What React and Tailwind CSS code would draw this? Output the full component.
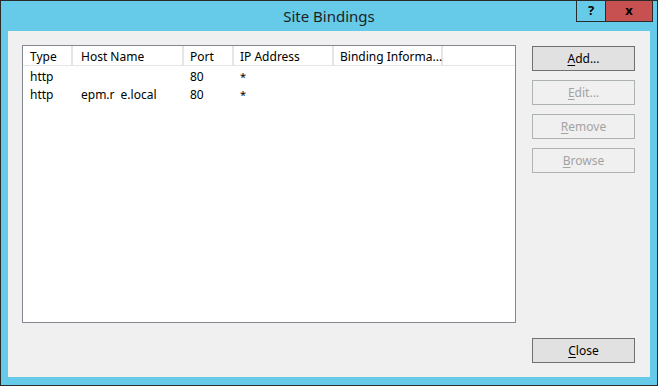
import React from 'react';

const COLUMNS = [
    { label: 'Type', width: 'w-[50px]', pad: 'pl-[7px]' },
    { label: 'Host Name', width: 'w-[111px]', pad: 'pl-[8px]' },
    { label: 'Port', width: 'w-[50px]', pad: 'pl-[6px]' },
    { label: 'IP Address', width: 'w-[100px]', pad: 'pl-[6px]' },
    { label: 'Binding Informa...', width: 'w-[109px]', pad: 'pl-[6px]' },
];

const ROWS = [
    { type: 'http', host: null, port: '80', ip: '*' },
    { type: 'http', host: 'redacted', port: '80', ip: '*' },
];

function DlgButton({ children, disabled }) {
    return (
        <button
            className={
                disabled
                    ? 'w-[103px] h-[25px] border border-[#adb2b5] bg-[#f0f0f0] text-[#a3a3a3] text-[12px] leading-none'
                    : 'w-[103px] h-[25px] border border-[#707070] bg-[#e1e1e1] text-black text-[12px] leading-none'
            }
        >
            {children}
        </button>
    );
}

export default function App() {
    return (
        <div className="w-[658px] h-[386px] bg-[#65cbe9] border border-[#2b2b2b] flex flex-col font-['Noto_Sans',sans-serif] select-none">
            {/* Title bar */}
            <div className="h-[30px] relative flex items-center justify-center">
                <span className="text-[15px] text-[#1e1e1e]">Site Bindings</span>
                <div className="absolute top-[-1px] right-[4px] flex">
                    <div className="w-[29px] h-[22px] border border-[#2b2b2b] border-r-0 flex items-center justify-center text-[13px] font-bold text-black">?</div>
                    <div className="w-[48px] h-[22px] bg-[#c75050] border border-[#2b2b2b] flex items-center justify-center text-[13px] font-bold text-black">x</div>
                </div>
            </div>

            {/* Client area */}
            <div className="flex-1 mx-[7px] mb-[8px] bg-[#f0f0f0] flex p-[14px] gap-[16px]">
                {/* Bindings list */}
                <div className="w-[494px] h-[278px] border border-[#828790] bg-white text-[12px] text-black">
                    <div className="flex h-[20px] border-b border-[#e5e5e5]">
                        {COLUMNS.map(col => (
                            <div key={col.label} className={`${col.width} ${col.pad} pt-[2px] border-r-2 border-[#e5e5e5] flex items-center whitespace-nowrap`}>
                                {col.label}
                            </div>
                        ))}
                    </div>
                    <div className="pt-[2px]">
                        {ROWS.map((row, i) => (
                            <div key={i} className="flex h-[18px] items-center whitespace-nowrap">
                                <div className="w-[50px] pl-[7px]">{row.type}</div>
                                <div className="w-[111px] pl-[8px] flex">
                                    {row.host && (
                                        <>
                                            <span>epm.r</span>
                                            <span className="w-[6px]" />
                                            <span>e.local</span>
                                        </>
                                    )}
                                </div>
                                <div className="w-[50px] pl-[6px]">{row.port}</div>
                                <div className="w-[100px] pl-[6px] text-[11px]">{row.ip}</div>
                            </div>
                        ))}
                    </div>
                </div>

                {/* Action buttons */}
                <div className="flex flex-col pt-[1px] gap-[9px]">
                    <DlgButton><span className="underline underline-offset-2">A</span>dd...</DlgButton>
                    <DlgButton disabled><span className="underline underline-offset-2">E</span>dit...</DlgButton>
                    <DlgButton disabled><span className="underline underline-offset-2">R</span>emove</DlgButton>
                    <DlgButton disabled><span className="underline underline-offset-2">B</span>rowse</DlgButton>
                    <div className="mt-auto">
                        <DlgButton><span className="underline underline-offset-2">C</span>lose</DlgButton>
                    </div>
                </div>
            </div>
        </div>
    );
}
